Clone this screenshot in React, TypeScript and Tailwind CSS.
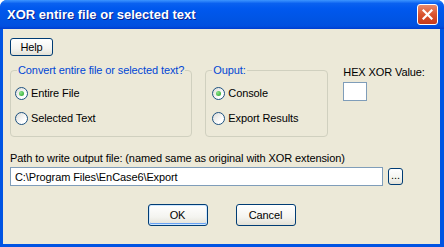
import React, { useState } from 'react';

const font = "font-['Liberation_Sans',Arial,sans-serif]";

function Radio({ label, checked, onClick }: { label: string; checked: boolean; onClick: () => void }) {
  return (
    <div className="flex items-center h-[13px] cursor-default" onClick={onClick}>
      <span className="w-[13px] h-[13px] rounded-full border border-[#1C5180] bg-[linear-gradient(135deg,#DCDCD7,#FFFFFF_70%)] flex items-center justify-center">
        {checked && <span className="w-[5px] h-[5px] rounded-full bg-[radial-gradient(circle_at_35%_35%,#8CE38C,#21A121)]" />}
      </span>
      <span className="ml-[3px] text-[11px] leading-[13px] text-black whitespace-nowrap">{label}</span>
    </div>
  );
}

function XpButton({ children, className = '', primary = false }: { children: React.ReactNode; className?: string; primary?: boolean }) {
  return (
    <button
      className={`border border-[#003C74] rounded-[3px] bg-[linear-gradient(180deg,#FFFFFF,#F4F4F0_60%,#E3E1D6)] text-[11px] text-black leading-none flex items-center justify-center ${
        primary ? 'shadow-[inset_0_0_0_1px_#CEE7FF,inset_0_-1px_0_1px_#69A3F5]' : ''
      } ${className}`}
    >
      {children}
    </button>
  );
}

export default function App() {
  const [scope, setScope] = useState('entire');
  const [output, setOutput] = useState('console');
  const [path, setPath] = useState('C:\\Program Files\\EnCase6\\Export');

  return (
    <div className={`w-[444px] h-[247px] bg-[#0054E3] rounded-t-[7px] flex flex-col ${font}`}>
      {/* Title bar */}
      <div className="h-[29px] shrink-0 rounded-t-[7px] bg-[linear-gradient(180deg,#3D95FF_0%,#0A61F0_12%,#0058EE_30%,#0054E3_70%,#0150E0_90%,#003DD0_100%)] flex items-center pl-[7px] pr-[6px]">
        <span className="text-white font-bold text-[13px] [text-shadow:1px_1px_0_#0A1E8C]">
          XOR entire file or selected text
        </span>
        <button className="ml-auto w-[21px] h-[21px] rounded-[3px] border border-white bg-[linear-gradient(180deg,#E98A6B,#D9532E_50%,#C7391A)] flex items-center justify-center">
          <svg width="11" height="11" viewBox="0 0 11 11">
            <path d="M1.5 1.5 L9.5 9.5 M9.5 1.5 L1.5 9.5" stroke="white" strokeWidth="2.2" strokeLinecap="square" />
          </svg>
        </button>
      </div>

      {/* Client area */}
      <div className="flex-1 ml-[3px] mr-[4px] mb-[3px] bg-[#ECE9D8] pl-[7px] flex flex-col tracking-[-0.1px]">
        <XpButton className="mt-[9px] w-[43px] h-[18px]">Help</XpButton>

        <div className="flex mt-[8px]">
          <fieldset className="w-[182px] h-[73px] border border-[#D0D0BF] rounded-[4px] px-[6px]">
            <legend className="px-[1px] text-[11px] leading-[13px] text-[#0046D5] whitespace-nowrap">Convert entire file or selected text?</legend>
            <div className="flex flex-col gap-[12px] pt-[10px] -ml-[2px]">
              <Radio label="Entire File" checked={scope === 'entire'} onClick={() => setScope('entire')} />
              <Radio label="Selected Text" checked={scope === 'selected'} onClick={() => setScope('selected')} />
            </div>
          </fieldset>

          <fieldset className="ml-[13px] w-[123px] h-[73px] border border-[#D0D0BF] rounded-[4px] px-[6px]">
            <legend className="px-[1px] text-[11px] leading-[13px] text-[#0046D5] whitespace-nowrap">Ouput:</legend>
            <div className="flex flex-col gap-[12px] pt-[10px]">
              <Radio label="Console" checked={output === 'console'} onClick={() => setOutput('console')} />
              <Radio label="Export Results" checked={output === 'export'} onClick={() => setOutput('export')} />
            </div>
          </fieldset>

          <div className="ml-[15px] flex flex-col">
            <span className="mt-[2px] text-[11px] leading-[13px] text-black whitespace-nowrap">HEX XOR Value:</span>
            <input className="mt-[3px] w-[24px] h-[19px] border border-[#7F9DB9] bg-white outline-none" />
          </div>
        </div>

        <span className="mt-[15px] h-[13px] text-[11px] leading-[13px] text-black whitespace-nowrap">
          Path to write output file: (named same as original with XOR extension)
        </span>
        <div className="flex items-center mt-[2px]">
          <input
            value={path}
            onChange={(e) => setPath(e.target.value)}
            className="w-[373px] h-[19px] border border-[#7F9DB9] bg-white px-[4px] text-[11px] text-black outline-none"
          />
          <XpButton className="ml-[5px] w-[15px] h-[17px] pb-[2px]">...</XpButton>
        </div>

        <div className="flex justify-center gap-[28px] mt-[18px] -ml-[7px]">
          <XpButton primary className="w-[60px] h-[22px]">OK</XpButton>
          <XpButton className="w-[60px] h-[22px]">Cancel</XpButton>
        </div>
      </div>
    </div>
  );
}
